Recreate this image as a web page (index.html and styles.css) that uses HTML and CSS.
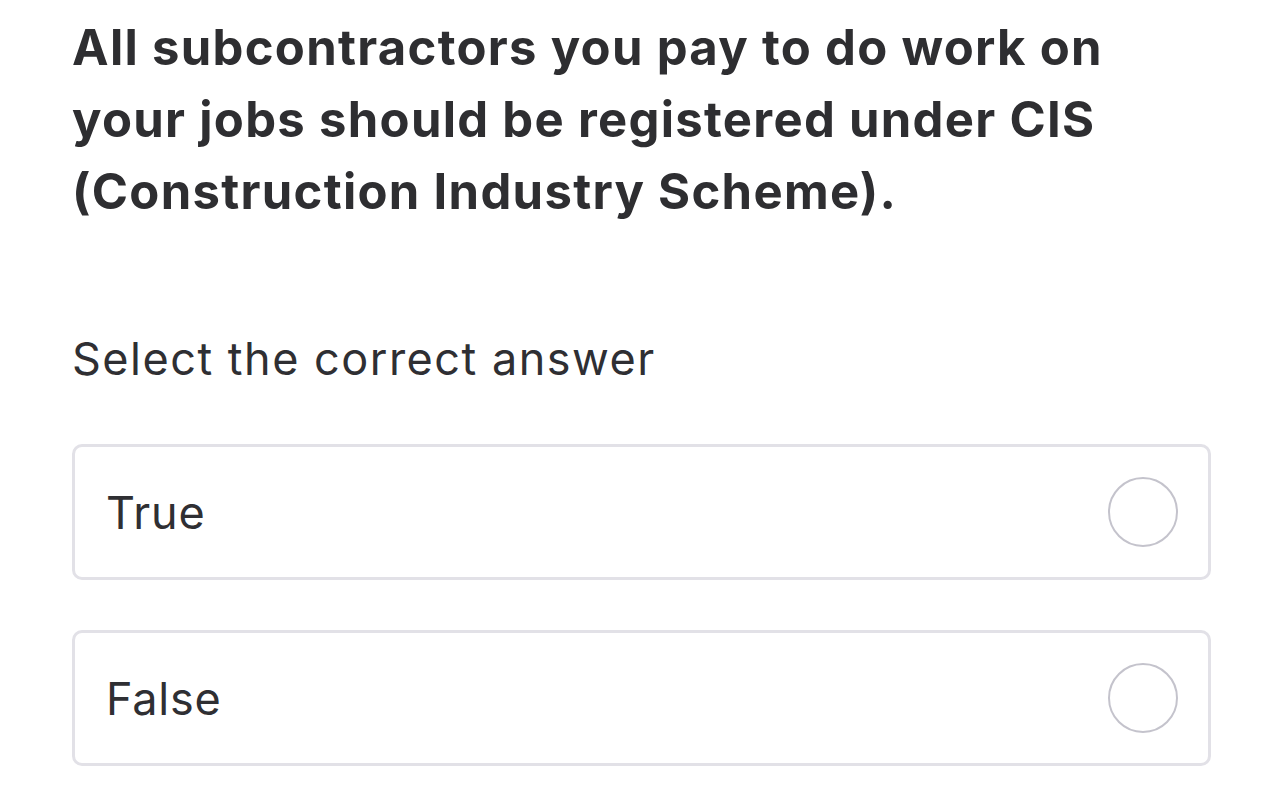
FILE: index.html
```html
<!DOCTYPE html>
<html>
<head>
<meta charset="utf-8">
<link rel="stylesheet" href="styles.css">
</head>
<body>
<main class="quiz">
  <h1 class="question">All subcontractors you pay to do work on your jobs should be registered under CIS (Construction Industry Scheme).</h1>
  <p class="prompt">Select the correct answer</p>
  <div class="options">
    <label class="option"><span class="option-text">True</span><span class="radio"></span></label>
    <label class="option"><span class="option-text">False</span><span class="radio"></span></label>
  </div>
</main>
</body>
</html>
```
FILE: styles.css
```css
html, body {
  margin: 0;
  padding: 0;
  background: #ffffff;
}
body {
  font-family: Inter, "Noto Sans", sans-serif;
  color: #2f2f33;
}
.quiz {
  padding: 12px 73px 0 72px;
}
.question {
  margin: 0;
  font-size: 49px;
  line-height: 72px;
  font-weight: 700;
  letter-spacing: 1.3px;
  color: #2e2e31;
  width: 1110px;
}
.prompt {
  margin: 104px 0 0 0;
  font-size: 45px;
  line-height: 54px;
  font-weight: 400;
  letter-spacing: 1.5px;
}
.options {
  margin-top: 58px;
  display: flex;
  flex-direction: column;
  gap: 50px;
}
.option {
  display: flex;
  align-items: center;
  justify-content: space-between;
  height: 136px;
  box-sizing: border-box;
  border: 3px solid #e2e1e7;
  border-radius: 10px;
  padding: 0 30px 0 31px;
}
.option-text {
  font-size: 45px;
  letter-spacing: 0.8px;
}
.radio {
  width: 70px;
  height: 70px;
  box-sizing: border-box;
  border: 2.5px solid #c4c3cc;
  border-radius: 50%;
}
```
